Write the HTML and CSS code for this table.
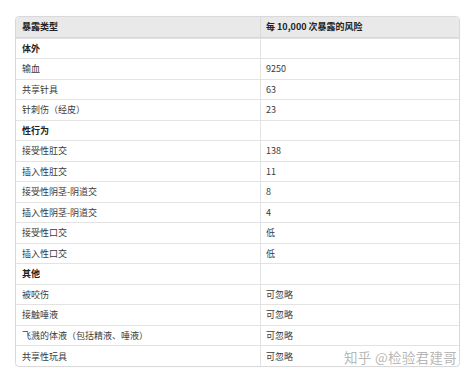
FILE: index.html
```html
<!DOCTYPE html>
<html lang="zh">
<head>
<meta charset="utf-8">
<link rel="stylesheet" href="styles.css">
</head>
<body>
<div class="page">
  <div class="table">
    <div class="row head"><div class="cell">暴露类型</div><div class="cell">每 10,000 次暴露的风险</div></div>
    <div class="row cat"><div class="cell">体外</div><div class="cell"></div></div>
    <div class="row"><div class="cell">输血</div><div class="cell">9250</div></div>
    <div class="row"><div class="cell">共享针具</div><div class="cell">63</div></div>
    <div class="row"><div class="cell">针刺伤（经皮）</div><div class="cell">23</div></div>
    <div class="row cat"><div class="cell">性行为</div><div class="cell"></div></div>
    <div class="row"><div class="cell">接受性肛交</div><div class="cell">138</div></div>
    <div class="row"><div class="cell">插入性肛交</div><div class="cell">11</div></div>
    <div class="row"><div class="cell">接受性阴茎-阴道交</div><div class="cell">8</div></div>
    <div class="row"><div class="cell">插入性阴茎-阴道交</div><div class="cell">4</div></div>
    <div class="row"><div class="cell">接受性口交</div><div class="cell">低</div></div>
    <div class="row"><div class="cell">插入性口交</div><div class="cell">低</div></div>
    <div class="row cat"><div class="cell">其他</div><div class="cell"></div></div>
    <div class="row"><div class="cell">被咬伤</div><div class="cell">可忽略</div></div>
    <div class="row"><div class="cell">接触唾液</div><div class="cell">可忽略</div></div>
    <div class="row"><div class="cell">飞溅的体液（包括精液、唾液）</div><div class="cell">可忽略</div></div>
    <div class="row"><div class="cell">共享性玩具</div><div class="cell">可忽略</div></div>
  </div>
  <div class="watermark">知乎 @检验君建哥</div>
</div>
</body>
</html>
```
FILE: styles.css
```css
html, body {
  margin: 0;
  padding: 0;
  background: #ffffff;
}
.page {
  position: relative;
  width: 474px;
  height: 379px;
  padding: 16px 0 0 15px;
  box-sizing: border-box;
  font-family: "Noto Sans CJK SC", "Noto Sans", sans-serif;
}
.table {
  width: 445px;
  border: 1px solid #d9d9d9;
  border-radius: 4px;
  overflow: hidden;
  box-sizing: border-box;
  box-shadow: 0 0 1px rgba(0,0,0,0.08);
}
.row {
  display: grid;
  grid-template-columns: 245px 1fr;
  height: 20.53px;
  box-sizing: border-box;
  border-top: 1px solid #e3e3e3;
}
.row:first-child {
  border-top: none;
}
.cell {
  display: flex;
  align-items: center;
  padding-left: 6px;
  font-size: 9px;
  color: #3a3a3a;
  white-space: nowrap;
}
.cell:first-child {
  border-right: 1px solid #e3e3e3;
}
.cell + .cell {
  padding-left: 5px;
}
.head {
  background: #e9e9e9;
  border-bottom: 1px solid #d6d6d6;
}
.head .cell {
  font-weight: 700;
  color: #222222;
}
.head .cell:first-child {
  border-right-color: #dadada;
}
.cat .cell {
  font-weight: 700;
  color: #222222;
}
.watermark {
  position: absolute;
  left: 344px;
  top: 347px;
  font-size: 13.5px;
  line-height: 20px;
  letter-spacing: 0.3px;
  color: rgba(170, 170, 170, 0.85);
  text-shadow: 0 0 1px #ffffff, 0 0 1px #ffffff;
  white-space: nowrap;
}
```
